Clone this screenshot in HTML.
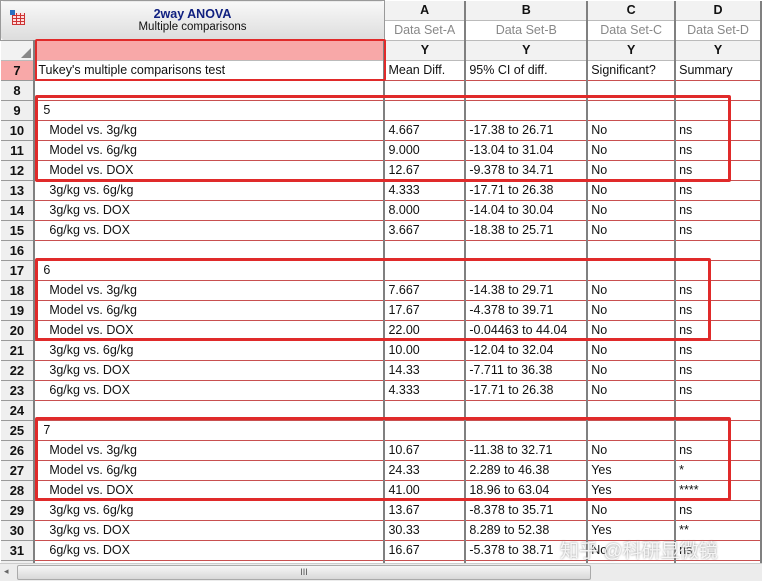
<!DOCTYPE html>
<html><head><meta charset="utf-8"><style>
body{margin:0;width:762px;height:580px;overflow:hidden;background:#fff;font-family:"Liberation Sans",Arial,sans-serif;font-size:12.5px;position:relative}
table{position:absolute;left:0;top:0;border-collapse:collapse;table-layout:fixed}
td{height:19px;padding:0 0 0 3px;border-right:2px solid #808080;border-bottom:1px solid #c85050;white-space:nowrap;overflow:hidden;color:#111}
td.h{background:#efefef;text-align:center;font-weight:bold;font-size:13px;padding:0;border-bottom:1px solid #999}
td.c{padding-left:14px}
tr.hd td{background:#f2f2f2;text-align:center;padding:0;border-bottom:1px solid #bbb}
.box{position:absolute;border:3px solid #e02a2a;border-radius:2px;box-sizing:border-box}
</style></head><body>
<table>
<colgroup><col style="width:34px"><col style="width:351px"><col style="width:81px"><col style="width:122px"><col style="width:88px"><col style="width:86px"></colgroup>
<tr class="hd"><td colspan="2" rowspan="2" style="background:linear-gradient(#f8f8f8,#dcdcdc);border:1px solid #999;border-radius:3px;position:relative;height:38px"><div style="position:absolute;left:11px;top:12px;width:13px;height:12px;background:repeating-linear-gradient(0deg,#c33 0 1px,transparent 1px 3px),repeating-linear-gradient(90deg,#c33 0 1px,#fdd 1px 4px)"></div><div style="position:absolute;left:9px;top:9px;width:5px;height:5px;background:#2a6fc0"></div><div style="color:#102080;font-weight:bold;font-size:12.5px">2way ANOVA</div><div style="font-size:11.5px">Multiple comparisons</div></td><td style="font-weight:bold">A</td><td style="font-weight:bold">B</td><td style="font-weight:bold">C</td><td style="font-weight:bold">D</td></tr>
<tr class="hd"><td style="background:#fff;color:#888">Data Set-A</td><td style="background:#fff;color:#888">Data Set-B</td><td style="background:#fff;color:#888">Data Set-C</td><td style="background:#fff;color:#888">Data Set-D</td></tr>
<tr class="hd"><td style="position:relative"><div style="position:absolute;right:2px;bottom:2px;width:0;height:0;border-left:10px solid transparent;border-bottom:10px solid #888"></div></td><td style="background:#f8a8a8"></td><td style="font-weight:bold">Y</td><td style="font-weight:bold">Y</td><td style="font-weight:bold">Y</td><td style="font-weight:bold">Y</td></tr>
<tr><td class="h" style="background:#f8a8a8">7</td><td>Tukey's multiple comparisons test</td><td>Mean Diff.</td><td>95% CI of diff.</td><td>Significant?</td><td>Summary</td></tr>
<tr><td class="h">8</td><td></td><td></td><td></td><td></td><td></td></tr>
<tr><td class="h">9</td><td style="padding-left:8px">5</td><td></td><td></td><td></td><td></td></tr>
<tr><td class="h">10</td><td class="c">Model vs. 3g/kg</td><td>4.667</td><td>-17.38 to 26.71</td><td>No</td><td>ns</td></tr>
<tr><td class="h">11</td><td class="c">Model vs. 6g/kg</td><td>9.000</td><td>-13.04 to 31.04</td><td>No</td><td>ns</td></tr>
<tr><td class="h">12</td><td class="c">Model vs. DOX</td><td>12.67</td><td>-9.378 to 34.71</td><td>No</td><td>ns</td></tr>
<tr><td class="h">13</td><td class="c">3g/kg vs. 6g/kg</td><td>4.333</td><td>-17.71 to 26.38</td><td>No</td><td>ns</td></tr>
<tr><td class="h">14</td><td class="c">3g/kg vs. DOX</td><td>8.000</td><td>-14.04 to 30.04</td><td>No</td><td>ns</td></tr>
<tr><td class="h">15</td><td class="c">6g/kg vs. DOX</td><td>3.667</td><td>-18.38 to 25.71</td><td>No</td><td>ns</td></tr>
<tr><td class="h">16</td><td></td><td></td><td></td><td></td><td></td></tr>
<tr><td class="h">17</td><td style="padding-left:8px">6</td><td></td><td></td><td></td><td></td></tr>
<tr><td class="h">18</td><td class="c">Model vs. 3g/kg</td><td>7.667</td><td>-14.38 to 29.71</td><td>No</td><td>ns</td></tr>
<tr><td class="h">19</td><td class="c">Model vs. 6g/kg</td><td>17.67</td><td>-4.378 to 39.71</td><td>No</td><td>ns</td></tr>
<tr><td class="h">20</td><td class="c">Model vs. DOX</td><td>22.00</td><td>-0.04463 to 44.04</td><td>No</td><td>ns</td></tr>
<tr><td class="h">21</td><td class="c">3g/kg vs. 6g/kg</td><td>10.00</td><td>-12.04 to 32.04</td><td>No</td><td>ns</td></tr>
<tr><td class="h">22</td><td class="c">3g/kg vs. DOX</td><td>14.33</td><td>-7.711 to 36.38</td><td>No</td><td>ns</td></tr>
<tr><td class="h">23</td><td class="c">6g/kg vs. DOX</td><td>4.333</td><td>-17.71 to 26.38</td><td>No</td><td>ns</td></tr>
<tr><td class="h">24</td><td></td><td></td><td></td><td></td><td></td></tr>
<tr><td class="h">25</td><td style="padding-left:8px">7</td><td></td><td></td><td></td><td></td></tr>
<tr><td class="h">26</td><td class="c">Model vs. 3g/kg</td><td>10.67</td><td>-11.38 to 32.71</td><td>No</td><td>ns</td></tr>
<tr><td class="h">27</td><td class="c">Model vs. 6g/kg</td><td>24.33</td><td>2.289 to 46.38</td><td>Yes</td><td>*</td></tr>
<tr><td class="h">28</td><td class="c">Model vs. DOX</td><td>41.00</td><td>18.96 to 63.04</td><td>Yes</td><td>****</td></tr>
<tr><td class="h">29</td><td class="c">3g/kg vs. 6g/kg</td><td>13.67</td><td>-8.378 to 35.71</td><td>No</td><td>ns</td></tr>
<tr><td class="h">30</td><td class="c">3g/kg vs. DOX</td><td>30.33</td><td>8.289 to 52.38</td><td>Yes</td><td>**</td></tr>
<tr><td class="h">31</td><td class="c">6g/kg vs. DOX</td><td>16.67</td><td>-5.378 to 38.71</td><td>No</td><td>ns</td></tr>
<tr><td class="h"></td><td></td><td></td><td></td><td></td><td></td></tr>
</table>
<div class="box" style="left:35px;top:39px;width:351px;height:42px;border-width:2px"></div>
<div class="box" style="left:35px;top:95px;width:696px;height:87px"></div>
<div class="box" style="left:35px;top:258px;width:676px;height:83px"></div>
<div class="box" style="left:35px;top:417px;width:696px;height:84px"></div>
<div style="position:absolute;left:560px;top:536px;color:rgba(255,255,255,0.85);font-size:19px;font-family:'Liberation Sans','Noto Sans CJK SC',sans-serif;text-shadow:0 0 2px #888">知乎 @科研显微镜</div>
<div style="position:absolute;left:0;top:563px;width:762px;height:17px;background:#ececec;border-top:1px solid #ccc"></div>
<div style="position:absolute;left:4px;top:566px;font-size:9px;color:#666">◂</div>
<div style="position:absolute;left:17px;top:565px;width:572px;height:13px;background:linear-gradient(#f6f6f6,#d8d8d8);border:1px solid #aaa;border-radius:2px;text-align:center;font-size:9px;line-height:13px;color:#555">III</div>
</body></html>
